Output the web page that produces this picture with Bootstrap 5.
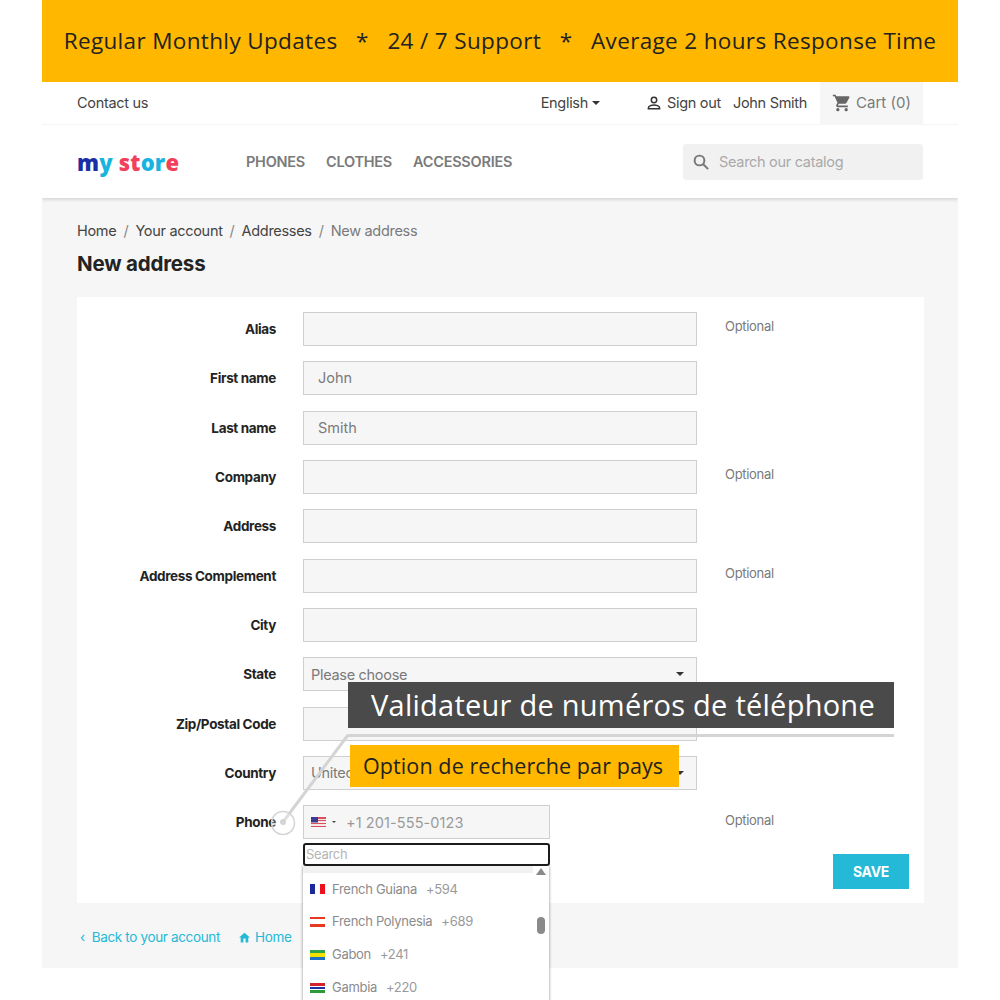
<!DOCTYPE html>
<html lang="en">
<head>
    <meta charset="UTF-8">
    <meta name="viewport" content="width=device-width, initial-scale=1.0">
    <title>New address</title>
    <link href="https://cdn.jsdelivr.net/npm/bootstrap@5.3.0/dist/css/bootstrap.min.css" rel="stylesheet">
    <style>
        body { background: #fff; font-family: Inter, "Liberation Sans", sans-serif; font-size: 14px; letter-spacing: -0.3px; color: #232323; }
        .shop-shell { width: 916px; margin-left: 42px; position: relative; height: 1000px; overflow: hidden; }
        .promo-bar { height: 82px; background: #ffb700; font-family: "Open Sans", sans-serif; font-size: 22.5px; letter-spacing: 0.35px; color: #222; white-space: pre; }
        .top-bar { height: 43px; padding: 0 35px; border-bottom: 1px solid #f6f6f6; color: #444; font-size: 14.5px; }
        .lang-pick { margin-left: 0; margin-right: 45px; }
        .caret-down { display: inline-block; border: 4.5px solid transparent; border-top-color: #333; border-bottom: 0; margin-left: 4px; vertical-align: 3px; }
        .cart-box { height: 42px; width: 103px; background: #f6f6f6; color: #7a7a7a; font-size: 15px; margin-left: 13px; letter-spacing: 0; }
        .main-head { height: 73px; padding: 0 35px; box-shadow: 0 2px 3px rgba(0,0,0,.12); position: relative; }
        .store-logo { width: 169px; font-family: "Open Sans", sans-serif; font-weight: 800; font-size: 22px; letter-spacing: 0.2px; line-height: 1; padding-top: 1px; }
        .store-logo .tone-a { color: #1b2fa5; }
        .store-logo .tone-b { color: #18b4e0; }
        .store-logo .tone-c { color: #f2405c; }
        .menu-link { color: #7a7a7a; font-weight: 600; font-size: 14.5px; margin-right: 21px; letter-spacing: -0.25px; }
        .search-pill { width: 240px; height: 36px; background: #f1f1f1; border-radius: 3px; color: #a9a9a9; font-size: 14.5px; padding-left: 9px; gap: 9px; }
        .body-area { background: #f6f6f6; height: 770px; padding: 0 34px 0 35px; }
        .crumbs { padding-top: 22px; height: 47px; font-size: 14.5px; color: #444; }
        .crumbs i { font-style: normal; color: #888; margin: 0 7px; }
        .crumbs .now { color: #7a7a7a; }
        .page-title { font-size: 20.5px; font-weight: 700; color: #232323; margin: 5px 0 20px; line-height: 27px; letter-spacing: -0.2px; }
        .form-panel { background: #fff; height: 606px; padding-top: 15px; position: relative; }
        .addr-row { height: 34px; margin-bottom: 15.35px; }
        .addr-label { width: 199px; text-align: right; font-weight: 700; font-size: 13.5px; color: #232323; margin-right: 27px; letter-spacing: -0.35px; }
        .addr-input { width: 394px; height: 34px; background: #f6f6f6; border: 1px solid #cfcfcf; color: #7a7a7a; font-size: 14.5px; padding-left: 14px; letter-spacing: 0; }
        .addr-input.pick { padding-left: 7px; padding-right: 12px; letter-spacing: -0.3px; }
        .addr-input.tel { width: 247px; padding-left: 7px; color: #9a9a9a; gap: 0; letter-spacing: 0.1px; }
        .opt-note { margin-left: 28px; color: #7a7a7a; font-size: 13px; position: relative; top: -2px; }
        .flag-box { width: 15px; height: 10px; display: inline-block; flex: none; }
        .flag-us { background: linear-gradient(90deg, #3c3b8f 45%, transparent 45%) top left / 100% 55% no-repeat, repeating-linear-gradient(180deg, #d8505c 0 1.5px, #f4e8e8 1.5px 3px); }
        .flag-fr { background: linear-gradient(90deg, #1a2a9c 33%, #fff 33% 66%, #ee1020 66%); }
        .flag-pf { background: linear-gradient(180deg, #e63a20 25%, #fff 25% 75%, #e63a20 75%); }
        .flag-ga { background: linear-gradient(180deg, #2fa24a 33%, #f6e000 33% 66%, #1f70c4 66%); }
        .flag-gm { background: linear-gradient(180deg, #d6202a 30%, #fff 30% 35%, #1f2fa8 35% 65%, #fff 65% 70%, #2f9a3a 70%); }
        .drop-tri { display: inline-block; border: 2px solid transparent; border-top-color: #444; border-bottom: 0; margin: 0 10px 0 6px; }
        .save-btn { position: absolute; right: 15px; top: 557px; width: 76px; height: 35px; background: #24b9d7; color: #fff; font-weight: 700; font-size: 14px; border: 0; letter-spacing: -0.3px; }
        .foot-links { padding: 24px 0 0 3px; color: #24b9d7; font-size: 13.5px; gap: 18px; letter-spacing: -0.35px; }
        .country-search { position: absolute; left: 303px; top: 843px; width: 247px; height: 23px; background: #fff; border: 2px solid #1c1c1c; border-radius: 3px; color: #b5b5b5; font-size: 13px; line-height: 19px; padding-left: 1px; }
        .country-list { position: absolute; left: 261px; top: 866px; width: 246px; height: 140px; background: #fff; box-shadow: 0 0 3px rgba(0,0,0,.45); color: #8b8b8b; font-size: 13px; padding: 0 0 0 7px; }
        .country-top { height: 7px; background: #f1f1f1; margin: 0 16px 0 -7px; }
        .country-item { height: 32.8px; gap: 7px; }
        .country-item span + span + span { margin-left: 2px; color: #9a9a9a; }
        .scroll-up { position: absolute; right: 3px; top: 2px; border: 5px solid transparent; border-bottom: 7px solid #8a8a8a; border-top: 0; }
        .scroll-thumb { position: absolute; right: 4px; top: 51px; width: 8px; height: 17px; border-radius: 4px; background: #8a8a8a; }
        .callout-dark { position: absolute; left: 306px; top: 682px; width: 546px; height: 46px; background: #4a4a4a; color: #fff; font-family: "Open Sans", sans-serif; font-size: 29px; line-height: 45px; padding-left: 23px; letter-spacing: 0.25px; }
        .callout-rule { position: absolute; left: 306px; top: 734px; width: 546px; height: 3px; background: #d4d4d4; }
        .callout-amber { position: absolute; left: 308px; top: 745px; width: 329px; height: 42px; background: #ffb700; color: #222; font-family: "Open Sans", sans-serif; font-size: 21.5px; line-height: 42px; padding-left: 13px; letter-spacing: 0.1px; }
        .callout-line { position: absolute; left: 0; top: 0; }
    </style>
</head>
<body>
    <div class="shop-shell">
        <div class="promo-bar d-flex align-items-center justify-content-center">Regular Monthly Updates   *   24 / 7 Support   *   Average 2 hours Response Time</div>

        <div class="top-bar d-flex align-items-center">
            <span class="me-auto">Contact us</span>
            <span class="lang-pick">English<span class="caret-down"></span></span>
            <svg class="me-1" width="18" height="18" viewBox="0 0 24 24" fill="none" stroke="#333" stroke-width="2"><circle cx="12" cy="8" r="3.6"/><path d="M4.5 19.5v-1c0-2.6 5-4 7.500-4s7.500 1.400 7.500 4v1z"/></svg>
            <span>Sign out</span>
            <span class="ms-2 ps-1">John Smith</span>
            <div class="cart-box d-flex align-items-center justify-content-center">
                <svg class="me-1" width="20" height="20" viewBox="0 0 24 24" fill="#666"><path d="M7 18a2 2 0 1 0 0 4 2 2 0 0 0 0-4zm10 0a2 2 0 1 0 0 4 2 2 0 0 0 0-4zM1 2v2h2l3.600 7.590-1.350 2.450C4.520 15.370 5.480 17 7 17h12v-2H7.420a.25.25 0 0 1-.25-.25l.03-.12L8.100 13h7.450c.75 0 1.410-.41 1.750-1.030L20.880 5.500A1 1 0 0 0 20 4H5.210l-.94-2z"/></svg>
                <span>Cart (0)</span>
            </div>
        </div>

        <div class="main-head d-flex align-items-center">
            <div class="store-logo"><span class="tone-a">m</span><span class="tone-b">y</span> <span class="tone-c">st</span><span class="tone-b">or</span><span class="tone-c">e</span></div>
            <span class="menu-link">PHONES</span>
            <span class="menu-link">CLOTHES</span>
            <span class="menu-link me-auto">ACCESSORIES</span>
            <div class="search-pill d-flex align-items-center">
                <svg width="18" height="18" viewBox="0 0 24 24" fill="none" stroke="#777" stroke-width="2.600"><circle cx="10" cy="10" r="6.500"/><path d="M15 15l6.500 6.500"/></svg>
                <span>Search our catalog</span>
            </div>
        </div>

        <div class="body-area">
            <div class="crumbs">Home<i>/</i>Your account<i>/</i>Addresses<i>/</i><span class="now">New address</span></div>
            <h1 class="page-title">New address</h1>

            <div class="form-panel">
                <div class="addr-row d-flex align-items-center"><label class="addr-label">Alias</label><div class="addr-input"></div><span class="opt-note">Optional</span></div>
                <div class="addr-row d-flex align-items-center"><label class="addr-label">First name</label><div class="addr-input d-flex align-items-center">John</div></div>
                <div class="addr-row d-flex align-items-center"><label class="addr-label">Last name</label><div class="addr-input d-flex align-items-center">Smith</div></div>
                <div class="addr-row d-flex align-items-center"><label class="addr-label">Company</label><div class="addr-input"></div><span class="opt-note">Optional</span></div>
                <div class="addr-row d-flex align-items-center"><label class="addr-label">Address</label><div class="addr-input"></div></div>
                <div class="addr-row d-flex align-items-center"><label class="addr-label">Address Complement</label><div class="addr-input"></div><span class="opt-note">Optional</span></div>
                <div class="addr-row d-flex align-items-center"><label class="addr-label">City</label><div class="addr-input"></div></div>
                <div class="addr-row d-flex align-items-center"><label class="addr-label">State</label><div class="addr-input pick d-flex align-items-center justify-content-between"><span>Please choose</span><span class="caret-down"></span></div></div>
                <div class="addr-row d-flex align-items-center"><label class="addr-label">Zip/Postal Code</label><div class="addr-input"></div></div>
                <div class="addr-row d-flex align-items-center"><label class="addr-label">Country</label><div class="addr-input pick d-flex align-items-center justify-content-between"><span>United States</span><span class="caret-down"></span></div></div>
                <div class="addr-row d-flex align-items-center"><label class="addr-label">Phone</label><div class="addr-input tel d-flex align-items-center"><span class="flag-box flag-us"></span><span class="drop-tri"></span><span>+1 201-555-0123</span></div><span class="opt-note" style="margin-left:175px">Optional</span></div>
                <button class="save-btn" type="button">SAVE</button>
            </div>

            <div class="foot-links d-flex align-items-center">
                <span>‹&nbsp;&nbsp;Back to your account</span>
                <span class="d-flex align-items-center gap-1"><svg width="13" height="13" viewBox="0 0 24 24" fill="#24b9d7"><path d="M10 21v-7h4v7h5v-9h3L12 3 2 12h3v9z"/></svg>Home</span>
            </div>
        </div>

        <div class="country-list">
            <div class="country-top"></div>
            <div class="country-item d-flex align-items-center"><span class="flag-box flag-fr"></span><span>French Guiana</span><span>+594</span></div>
            <div class="country-item d-flex align-items-center"><span class="flag-box flag-pf"></span><span>French Polynesia</span><span>+689</span></div>
            <div class="country-item d-flex align-items-center"><span class="flag-box flag-ga"></span><span>Gabon</span><span>+241</span></div>
            <div class="country-item d-flex align-items-center"><span class="flag-box flag-gm"></span><span>Gambia</span><span>+220</span></div>
            <span class="scroll-up"></span>
            <span class="scroll-thumb"></span>
        </div>
        <div class="country-search" style="left:261px">Search</div>

        <svg class="callout-line" width="400" height="860" fill="none">
            <path d="M306 735 L241 822" stroke="#d4d4d4" stroke-width="3"/>
            <circle cx="241" cy="823" r="11.500" stroke="#d4d4d4" stroke-width="1.500" fill="#fff" fill-opacity=".25"/>
            <circle cx="241" cy="822" r="3" fill="#d4d4d4"/>
        </svg>
        <div class="callout-rule"></div>
        <div class="callout-dark">Validateur de numéros de téléphone</div>
        <div class="callout-amber">Option de recherche par pays</div>
    </div>

    <script src="https://cdn.jsdelivr.net/npm/bootstrap@5.3.0/dist/js/bootstrap.bundle.min.js"></script>
</body>
</html>
